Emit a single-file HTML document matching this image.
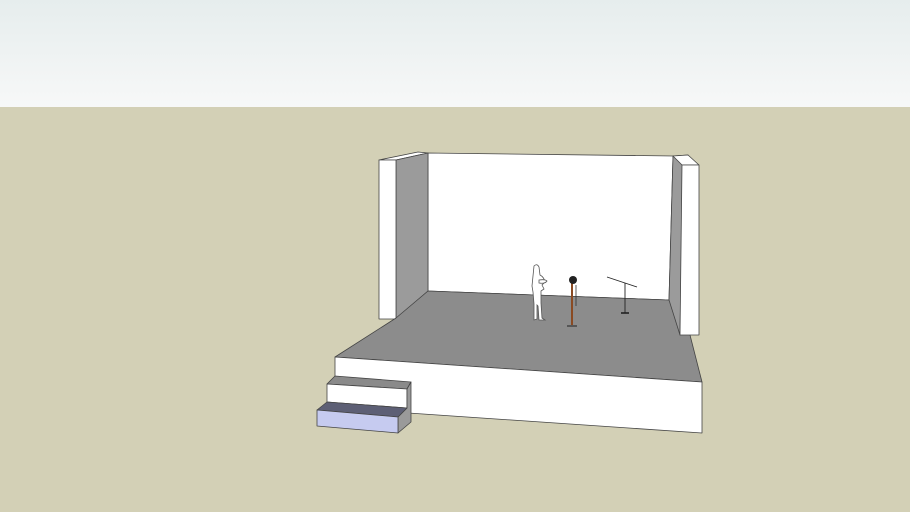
<!DOCTYPE html>
<html><head><meta charset="utf-8"><style>
html,body{margin:0;padding:0;width:910px;height:512px;overflow:hidden;background:#d3d0b6}
.sky{position:absolute;left:0;top:0;width:910px;height:107px;background:linear-gradient(#e6eded,#f7f8f8)}
svg{position:absolute;left:0;top:0}
</style></head><body>
<div class="sky"></div>
<svg width="910" height="512" viewBox="0 0 910 512">
<g stroke="#444" stroke-width="0.8" stroke-linejoin="round">
<!-- back wall -->
<polygon points="428,153 673,156 669,300 428,291" fill="#fff"/>
<!-- left wall top -->
<polygon points="379,160 418,152 428,153 396,160" fill="#fff"/>
<!-- left inner side -->
<polygon points="396,160 428,153 428,291 396,319" fill="#9b9b9b"/>
<!-- left wall front -->
<polygon points="379,160 396,160 396,319 379,319" fill="#fff"/>
<!-- floor -->
<polygon points="396,318 428,291 669,300 690,335 702,382 335,357" fill="#8c8c8c"/>
<!-- right wall inner -->
<polygon points="673,156 688,155 683,165 680,335 669,300" fill="#9b9b9b"/>
<polygon points="673,156 688,155 699,165 682,165" fill="#fff"/>
<!-- right wall front -->
<polygon points="682,165 699,165 699,335 680,335" fill="#fff"/>
<!-- stage front -->
<polygon points="335,357 702,382 702,433 335,408" fill="#fff"/>
<!-- steps -->
<polygon points="327,384 335,376 411,382 407,389" fill="#8a8a8a"/>
<polygon points="327,384 407,389 407,408 327,402" fill="#fff"/>
<polygon points="407,389 411,382 411,422 398,433 398,417 407,408" fill="#9a9a9a"/>
<polygon points="317,410 327,402 407,408 398,417" fill="#5d5f75"/>
<polygon points="317,410 398,417 398,433 317,426" fill="#c6cbf0"/>
</g>
<!-- person -->
<g stroke="#555" stroke-width="0.8" fill="#fff">
<path d="M534,266 q3,-3 5,1 l1,8 q4,2 5,7 l-3,3 l2,4 l-3,2 l0,12 l1,15 l3,2 l-6,0 l-1,-14 l-1,-1 l0,14 l-3,1 l0,-16 l-1,-12 l-1,-6 z"/>
<path d="M539,280 q6,-1 8,1 q-2,3 -8,2z"/>
</g>
<!-- stand -->
<line x1="572" y1="282" x2="572" y2="325" stroke="#8a4a22" stroke-width="2"/>
<line x1="567" y1="326" x2="577" y2="326" stroke="#333" stroke-width="1.2"/>
<circle cx="573" cy="280" r="4" fill="#222"/>
<line x1="576" y1="285" x2="576" y2="306" stroke="#333" stroke-width="0.8"/>
<!-- mic stand -->
<g stroke="#222" stroke-width="0.9">
<line x1="607" y1="277" x2="637" y2="287"/>
<line x1="625" y1="283" x2="625" y2="313"/>
<line x1="621" y1="313" x2="629" y2="313" stroke-width="1.6"/>
</g>
</svg>
</body></html>
